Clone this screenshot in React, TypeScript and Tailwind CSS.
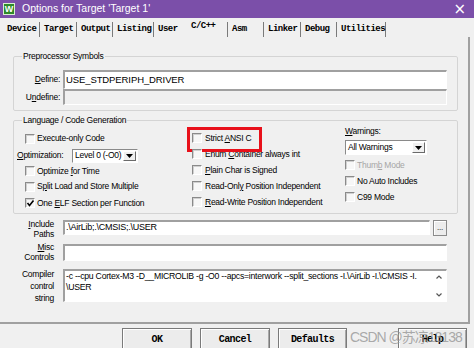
import React from 'react';

type Node = React.ReactNode;

function Box({ checked }: { checked?: boolean }) {
  return (
    <span className="relative inline-block w-[10px] h-[10px] shrink-0 border-t border-l border-[#8a8a8a] border-b border-r border-b-white border-r-white bg-[#f7f7f7] shadow-[inset_1px_1px_0_#d0d0d0]">
      {checked && (
        <svg className="absolute left-[0px] top-[0px]" width="9" height="9" viewBox="0 0 9 9">
          <path d="M1.5 4 L3.5 6.5 L7.5 1.5" fill="none" stroke="#000" strokeWidth="1.6" />
        </svg>
      )}
    </span>
  );
}

function Check({ label, checked, disabled, h = 'h-[16px]', gap = 'ml-[2px]' }: { label: Node; checked?: boolean; disabled?: boolean; h?: string; gap?: string }) {
  return (
    <div className={`flex items-center ${h}`}>
      <Box checked={checked} />
      <span className={`${gap} whitespace-nowrap ${disabled ? 'text-[#a6a6a6]' : ''}`}>{label}</span>
    </div>
  );
}

function Select({ value, w, h }: { value: string; w: string; h: string }) {
  return (
    <div className={`flex items-stretch ${w} ${h} bg-white border-t border-l border-[#8a8a8a] border-b border-r border-b-white border-r-white`}>
      <span className="flex-1 pl-[2px] flex items-center whitespace-nowrap">{value}</span>
      <span className="w-[13px] m-[1px] flex items-center justify-center bg-[#f0f0f0] border border-t-white border-l-white border-b-[#6a6a6a] border-r-[#6a6a6a]">
        <svg width="7" height="4" viewBox="0 0 7 4">
          <path d="M0 0 H7 L3.5 4 Z" fill="#000" />
        </svg>
      </span>
    </div>
  );
}

const sunken = 'border-t-2 border-l-2 border-[#a0a0a0] border-b border-r border-b-white border-r-white';

const tabs: { name: string; w: string; sel?: boolean; border: string }[] = [
  { name: 'Device', w: 'w-[36px]', border: '' },
  { name: 'Target', w: 'w-[37px]', border: 'border-l' },
  { name: 'Output', w: 'w-[36px]', border: 'border-l' },
  { name: 'Listing', w: 'w-[41px]', border: 'border-l' },
  { name: 'User', w: 'w-[32px]', border: 'border-l' },
  { name: 'C/C++', w: 'w-[42px]', sel: true, border: '' },
  { name: 'Asm', w: 'w-[36px]', border: 'border-l' },
  { name: 'Linker', w: 'w-[37px]', border: 'border-l' },
  { name: 'Debug', w: 'w-[36px]', border: 'border-l' },
  { name: 'Utilities', w: 'w-[50px]', border: 'border-l border-r' },
];

function Btn({ label, cls }: { label: string; cls: string }) {
  return (
    <div className={`${cls} h-[22px] flex items-center justify-center bg-[#ececec] border border-[#7a7a7a] shadow-[inset_1px_1px_0_#ffffff,inset_-1px_-1px_0_#a8a8a8] font-[family-name:'Liberation_Mono',monospace] text-[10px] font-bold tracking-[-0.6px]`}>
      {label}
    </div>
  );
}

export default function App() {
  return (
    <div className="relative w-[474px] h-[348px] overflow-hidden bg-[#f0f0f0] text-black font-[family-name:'Liberation_Sans',Arial,sans-serif] text-[8.5px] tracking-[-0.25px] flex flex-col">
      {/* title bar */}
      <div className="h-[18px] shrink-0 bg-[#7b4fa9] flex items-center tracking-normal">
        <span className="ml-[3px] w-[12px] h-[12px] bg-[#2f8a2a] border border-[#d8efd0] flex items-center justify-center text-white text-[9px] font-bold leading-none">W</span>
        <span className="ml-[7px] text-white text-[10.5px] whitespace-nowrap">Options for Target 'Target 1'</span>
        <span className="ml-auto mr-[8px] text-white text-[15px] leading-none font-[family-name:'DejaVu_Sans',sans-serif]">×</span>
      </div>

      {/* tabs */}
      <div className="h-[19px] shrink-0 flex items-end pl-[3px] font-[family-name:'Liberation_Mono',monospace] text-[9px] font-bold tracking-[-0.5px]">
        {tabs.map((t) => (
          <div
            key={t.name}
            className={`${t.w} ${t.border} border-[#7a7a7a] h-[15px] pl-[4px] flex whitespace-nowrap ${t.sel ? 'items-start -mt-[4px] h-[19px] pt-[2px] pl-[6px]' : 'items-center'}`}
          >
            {t.name}
          </div>
        ))}
      </div>

      {/* page */}
      <div className="w-[470px] h-[287px] shrink-0 border-r-2 border-b-2 border-[#a0a0a0] pl-[13px] pr-[10px] pt-[13px] flex flex-col">
        <fieldset className="border border-[#d4d4d4] rounded-[2px] pb-[5px]">
          <legend className="ml-[8px] px-[1px] leading-[13px]">Preprocessor Symbols</legend>
          <div className="flex items-center mt-[7px]">
            <span className="w-[46px] text-right"><u>D</u>efine:</span>
            <div className={`ml-[3px] w-[384px] h-[19px] bg-white ${sunken} pl-[1px] flex items-center text-[9.5px] tracking-[-0.1px]`}>USE_STDPERIPH_DRIVER</div>
          </div>
          <div className="flex items-center">
            <span className="w-[46px] text-right">U<u>n</u>define:</span>
            <div className={`ml-[3px] w-[384px] h-[16px] bg-[#f0f0f0] ${sunken}`}></div>
          </div>
        </fieldset>

        <fieldset className="mt-[3px] border border-[#d4d4d4] rounded-[2px] pb-[2px]">
          <legend className="ml-[8px] px-[1px] leading-[13px]">Language / Code Generation</legend>
          <div className="flex pt-[3px]">
            <div className="w-[178px] pl-[3px] flex flex-col">
              <div className="pl-[8px]"><Check label="Execute-only Code" h="h-[17px]" /></div>
              <div className="flex items-center h-[17px]">
                <span className="w-[55px]"><u>O</u>ptimization:</span>
                <Select value="Level 0 (-O0)" w="w-[66px]" h="h-[14px]" />
              </div>
              <div className="pl-[8px]">
                <Check h="h-[14px]" label={<>Optimize <u>f</u>or Time</>} />
                <Check h="h-[17px]" label={<>S<u>p</u>lit Load and Store Multiple</>} />
                <Check checked label={<>One <u>E</u>LF Section per Function</>} />
              </div>
            </div>
            <div className="relative w-[153px] flex flex-col">
              <div className="absolute left-[-5px] top-[-3px] w-[75px] h-[25px] border-[3px] border-[#e8101a]"></div>
              <Check gap="ml-[3px]" label={<>Strict <u>A</u>NSI C</>} />
              <Check gap="ml-[3px]" label={<>Enum <u>C</u>ontainer always int</>} />
              <Check gap="ml-[3px]" label={<><u>P</u>lain Char is Signed</>} />
              <Check gap="ml-[3px]" label={<>Read-Onl<u>y</u> Position Independent</>} />
              <Check gap="ml-[3px]" label={<><u>R</u>ead-Write Position Independent</>} />
            </div>
            <div className="flex-1 flex flex-col">
              <span className="-mt-[5px] leading-[12px]"><u>W</u>arnings:</span>
              <div className="mt-[3px]"><Select value="All Warnings" w="w-[82px]" h="h-[15px]" /></div>
              <div className="mt-[2px]">
                <Check disabled label={<>Thum<u>b</u> Mode</>} />
                <Check label="No Auto Includes" />
                <Check label="C99 Mode" />
              </div>
            </div>
          </div>
        </fieldset>

        <div className="flex items-start mt-[5px] h-[21px]">
          <div className="w-[41px] text-right leading-[10px]"><u>I</u>nclude<br />Paths</div>
          <div className={`ml-[9px] mt-[1px] w-[367px] h-[15px] bg-white ${sunken} pl-[1px] flex items-center text-[9px]`}>.\AirLib;.\CMSIS;.\USER</div>
          <div className="ml-[3px] mt-[1px] w-[14px] h-[16px] bg-[#ececec] border border-[#8a8a8a] shadow-[inset_1px_1px_0_#ffffff] flex items-center justify-center text-[8px] leading-none">...</div>
        </div>
        <div className="flex items-start mt-[2px] h-[21px]">
          <div className="w-[41px] text-right leading-[10px]"><u>M</u>isc<br />Controls</div>
          <div className={`ml-[9px] mt-[2px] w-[384px] h-[17px] bg-white ${sunken}`}></div>
        </div>
        <div className="flex items-start mt-[5px]">
          <div className="w-[41px] text-right leading-[12px]">Compiler<br />control<br />string</div>
          <div className={`relative ml-[9px] mt-[1px] w-[384px] h-[33px] bg-white ${sunken} pl-[1px] leading-[11px] whitespace-nowrap text-[8.7px]`}>
            <div>-c --cpu Cortex-M3 -D__MICROLIB -g -O0 --apcs=interwork --split_sections -I.\AirLib -I.\CMSIS -I.</div>
            <div>\USER</div>
            <svg className="absolute right-[4px] top-[4px]" width="6" height="4" viewBox="0 0 6 4">
              <path d="M0.5 3.5 L3 1 L5.5 3.5" fill="none" stroke="#555" strokeWidth="1.2" />
            </svg>
            <svg className="absolute right-[4px] bottom-[4px]" width="6" height="4" viewBox="0 0 6 4">
              <path d="M0.5 0.5 L3 3 L5.5 0.5" fill="none" stroke="#555" strokeWidth="1.2" />
            </svg>
          </div>
        </div>
      </div>

      {/* buttons */}
      <div className="flex items-start pt-[4px]">
        <Btn label="OK" cls="ml-[122px] w-[70px]" />
        <Btn label="Cancel" cls="ml-[8px] w-[70px]" />
        <Btn label="Defaults" cls="ml-[8px] w-[69px]" />
        <Btn label="Help" cls="ml-[51px] w-[69px]" />
      </div>

      <div className="absolute left-[350px] top-[328px] text-[14px] leading-[18px] tracking-[-1px] text-[rgba(150,150,150,0.8)] whitespace-nowrap font-[family-name:'Liberation_Sans','Noto_Sans_CJK_SC',sans-serif]">
        CSDN @苏凉13138
      </div>
    </div>
  );
}
